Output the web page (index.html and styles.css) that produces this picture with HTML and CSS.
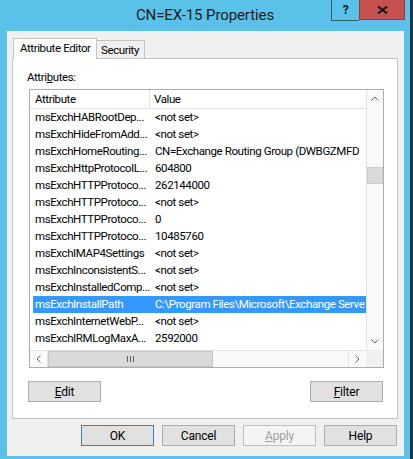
FILE: index.html
```html
<!DOCTYPE html>
<html lang="en">
<head>
<meta charset="UTF-8">
<title>CN=EX-15 Properties</title>
<link rel="stylesheet" href="styles.css">
</head>
<body>

<div class="window">
  <div class="titlebar">
    <span class="title">CN=EX-15 Properties</span>
    <div class="caption-buttons">
      <span class="cap-btn cap-help">?</span>
      <span class="cap-btn cap-close">
        <svg width="11" height="8" viewBox="0 0 11 8"><path d="M1 0.5 L10 7.5 M10 0.5 L1 7.5" stroke="#1a1a1a" stroke-width="2.2" fill="none"/></svg>
      </span>
    </div>
  </div>

  <div class="client">
    <div class="tabs">
      <div class="tab active">Attribute Editor</div>
      <div class="tab">Security</div>
    </div>

    <div class="panel">
      <div class="label">Attri<u>b</u>utes:</div>

      <div class="listbox">
        <div class="list-main">
          <div class="list-header">
            <div class="col-attr">Attribute</div>
            <div class="col-val">Value</div>
          </div>
          <div class="list-rows">
            <div class="row"><div class="col-attr">msExchHABRootDep...</div><div class="col-val">&lt;not set&gt;</div></div>
            <div class="row"><div class="col-attr">msExchHideFromAdd...</div><div class="col-val">&lt;not set&gt;</div></div>
            <div class="row"><div class="col-attr">msExchHomeRouting...</div><div class="col-val">CN=Exchange Routing Group (DWBGZMFD</div></div>
            <div class="row"><div class="col-attr">msExchHttpProtocolL...</div><div class="col-val">604800</div></div>
            <div class="row"><div class="col-attr">msExchHTTPProtoco...</div><div class="col-val">262144000</div></div>
            <div class="row"><div class="col-attr">msExchHTTPProtoco...</div><div class="col-val">&lt;not set&gt;</div></div>
            <div class="row"><div class="col-attr">msExchHTTPProtoco...</div><div class="col-val">0</div></div>
            <div class="row"><div class="col-attr">msExchHTTPProtoco...</div><div class="col-val">10485760</div></div>
            <div class="row"><div class="col-attr">msExchIMAP4Settings</div><div class="col-val">&lt;not set&gt;</div></div>
            <div class="row"><div class="col-attr">msExchInconsistentS...</div><div class="col-val">&lt;not set&gt;</div></div>
            <div class="row"><div class="col-attr">msExchInstalledComp...</div><div class="col-val">&lt;not set&gt;</div></div>
            <div class="row selected"><div class="col-attr">msExchInstallPath</div><div class="col-val">C:\Program Files\Microsoft\Exchange Serve</div></div>
            <div class="row"><div class="col-attr">msExchInternetWebP...</div><div class="col-val">&lt;not set&gt;</div></div>
            <div class="row"><div class="col-attr">msExchIRMLogMaxA...</div><div class="col-val">2592000</div></div>
          </div>
        </div>

        <div class="vscroll">
          <div class="sb-arrow">
            <svg width="8" height="5" viewBox="0 0 8 5"><path d="M0.5 4.5 L4 1 L7.5 4.5" stroke="#606060" fill="none"/></svg>
          </div>
          <div class="sb-track">
            <div class="vthumb"></div>
          </div>
          <div class="sb-arrow">
            <svg width="8" height="5" viewBox="0 0 8 5"><path d="M0.5 0.5 L4 4 L7.5 0.5" stroke="#606060" fill="none"/></svg>
          </div>
        </div>

        <div class="hscroll">
          <div class="sb-arrow">
            <svg width="5" height="8" viewBox="0 0 5 8"><path d="M4.5 0.5 L1 4 L4.5 7.5" stroke="#606060" fill="none"/></svg>
          </div>
          <div class="sb-track">
            <div class="hthumb">
              <svg width="7" height="6" viewBox="0 0 7 6"><path d="M0.5 0 V6 M3.5 0 V6 M6.5 0 V6" stroke="#606060" fill="none"/></svg>
            </div>
          </div>
          <div class="sb-arrow">
            <svg width="5" height="8" viewBox="0 0 5 8"><path d="M0.5 0.5 L4 4 L0.5 7.5" stroke="#606060" fill="none"/></svg>
          </div>
        </div>
        <div class="corner"></div>
      </div>

      <div class="panel-buttons">
        <button class="btn"><u>E</u>dit</button>
        <button class="btn"><u>F</u>ilter</button>
      </div>
    </div>

    <div class="dialog-buttons">
      <button class="btn default">OK</button>
      <button class="btn">Cancel</button>
      <button class="btn disabled"><u>A</u>pply</button>
      <button class="btn">Help</button>
    </div>
  </div>
</div>

</body>
</html>
```

FILE: styles.css
```css
html,
body {
  margin: 0;
  padding: 0;
}

body {
  width: 413px;
  height: 459px;
  background-color: #1c3444;
  font-family: Roboto, "Liberation Sans", sans-serif;
  font-size: 11.5px;
  letter-spacing: -0.4px;
  color: #000;
  overflow: hidden;
}

.window {
  width: 410px;
  height: 459px;
  box-sizing: border-box;
  padding: 0 6px 3px 7px;
  background-color: #5ac2e8;
  display: flex;
  flex-direction: column;
}

.titlebar {
  height: 31px;
  margin: 0 -6px 0 -7px;
  position: relative;
  display: flex;
  justify-content: center;
  align-items: center;
}

.title {
  font-size: 15px;
  letter-spacing: -0.1px;
  color: #1c1c1c;
  margin-top: -1px;
}

.caption-buttons {
  position: absolute;
  top: 0;
  right: 5px;
  display: flex;
}

.cap-btn {
  height: 20px;
  display: flex;
  align-items: center;
  justify-content: center;
  box-sizing: border-box;
}

.cap-help {
  width: 28px;
  height: 21px;
  border: 1px solid #3d5866;
  border-top: none;
  border-right: none;
  font-weight: bold;
  font-size: 12px;
  color: #1a1a1a;
}

.cap-close {
  width: 46px;
  background-color: #c7514e;
  border: 1px solid #8e3b39;
  border-top: none;
}

.client {
  flex: 1;
  background-color: #f0f0f0;
  padding-top: 7px;
  display: flex;
  flex-direction: column;
}

.tabs {
  display: flex;
  align-items: flex-end;
  margin: 0 0 -1px 6px;
  height: 21px;
}

.tab {
  box-sizing: border-box;
  height: 18px;
  margin-bottom: 1px;
  padding: 0 4px;
  border: 1px solid #c4c4c4;
  border-bottom: none;
  background-color: #f0f0f0;
  display: flex;
  align-items: center;
  white-space: nowrap;
}

.tab.active {
  height: 21px;
  margin-bottom: 0;
  width: 84px;
  padding: 0 0 2px 6px;
  background-color: #fff;
  position: relative;
  z-index: 1;
}

.tab + .tab {
  width: 48px;
  border-left: none;
}

.panel {
  box-sizing: border-box;
  height: 361px;
  margin: 0 6px 0 5px;
  border: 1px solid #c4c4c4;
  background-color: #fff;
}

.label {
  padding: 11px 0 0 14px;
  line-height: 15px;
}

.listbox {
  box-sizing: border-box;
  width: 355px;
  height: 279px;
  margin: 4px 0 0 16px;
  border: 1px solid #abadb3;
  display: grid;
  grid-template-columns: 1fr 17px;
  grid-template-rows: 1fr 17px;
}

.list-main {
  overflow: hidden;
}

.list-header {
  display: flex;
  height: 18px;
  border-bottom: 1px solid #e5e5e5;
  white-space: nowrap;
}

.list-header .col-attr,
.list-header .col-val {
  display: flex;
  align-items: center;
}

.list-header .col-attr {
  width: 114px;
  padding-left: 5px;
  border-right: 1px solid #e5e5e5;
}

.list-header .col-val {
  padding-left: 4px;
}

.list-rows {
  height: 241px;
  overflow: hidden;
}

.row {
  display: flex;
  height: 17px;
  line-height: 17px;
  margin-left: 3px;
  white-space: nowrap;
}

.row .col-attr {
  width: 115px;
  flex: none;
  padding-left: 2px;
}

.row .col-val {
  padding-left: 5px;
}

.row.selected {
  background-color: #3399ff;
  color: #fff;
}

.vscroll {
  grid-row: 1;
  grid-column: 2;
  border-left: 1px solid #e3e3e3;
  background-color: #fafafa;
  display: flex;
  flex-direction: column;
}

.sb-arrow {
  flex: none;
  width: 16px;
  height: 17px;
  display: flex;
  align-items: center;
  justify-content: center;
}

.sb-track {
  flex: 1;
  display: flex;
}

.vscroll .sb-track {
  flex-direction: column;
}

.vthumb {
  box-sizing: border-box;
  height: 17px;
  margin-top: 60px;
  background-color: #dadada;
  border: 1px solid #cdcdcd;
}

.hscroll {
  grid-row: 2;
  grid-column: 1;
  border-top: 1px solid #e3e3e3;
  background-color: #fafafa;
  display: flex;
}

.hscroll .sb-arrow {
  width: 17px;
  height: 16px;
  border-right: 1px solid #e3e3e3;
}

.hscroll .sb-arrow:last-child {
  border-right: none;
  border-left: 1px solid #e3e3e3;
}

.hthumb {
  box-sizing: border-box;
  width: 165px;
  background-color: #dadada;
  border: 1px solid #c6c6c6;
  display: flex;
  align-items: center;
  justify-content: center;
}

.corner {
  grid-row: 2;
  grid-column: 2;
  background-color: #f0f0f0;
}

.btn {
  box-sizing: border-box;
  width: 73px;
  height: 21px;
  padding: 0;
  font-family: inherit;
  font-size: 12px;
  letter-spacing: -0.2px;
  color: #000;
  background-color: #e1e1e1;
  border: 1px solid #adadad;
}

.btn.default {
  border-color: #3c7fb1;
}

.btn.disabled {
  background-color: #f4f4f4;
  border-color: #bfbfbf;
  color: #a0a0a0;
}

.panel-buttons {
  display: flex;
  justify-content: space-between;
  margin-top: 13px;
  padding: 0 14px 0 15px;
}

.dialog-buttons {
  display: flex;
  justify-content: flex-end;
  gap: 8px;
  margin-top: 6px;
  padding-right: 7px;
}
```
